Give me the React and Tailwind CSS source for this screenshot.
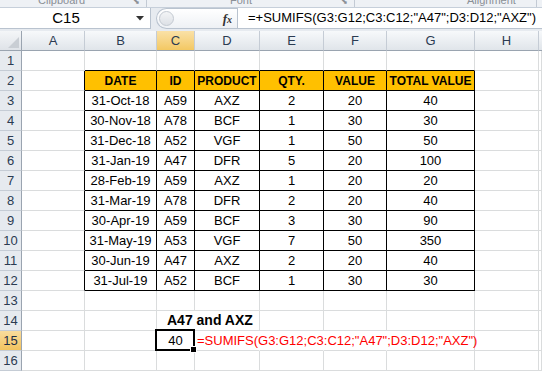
import React from "react";

const data = [
  ["31-Oct-18", "A59", "AXZ", "2", "20", "40"],
  ["30-Nov-18", "A78", "BCF", "1", "30", "30"],
  ["31-Dec-18", "A52", "VGF", "1", "50", "50"],
  ["31-Jan-19", "A47", "DFR", "5", "20", "100"],
  ["28-Feb-19", "A59", "AXZ", "1", "20", "20"],
  ["31-Mar-19", "A78", "DFR", "2", "20", "40"],
  ["30-Apr-19", "A59", "BCF", "3", "30", "90"],
  ["31-May-19", "A53", "VGF", "7", "50", "350"],
  ["30-Jun-19", "A47", "AXZ", "2", "20", "40"],
  ["31-Jul-19", "A52", "BCF", "1", "30", "30"],
];

const colWidths = ["w-[63px]", "w-[72px]", "w-[38px]", "w-[65px]", "w-[64px]", "w-[63px]", "w-[88px]", "w-[64px]"];
const colNames = ["A", "B", "C", "D", "E", "F", "G", "H"];

// r / b: "g" gridline, "k" black, "n" hidden
function Cell({ w, r = "g", b = "g", className = "", children }) {
  const rc = r === "k" ? "border-r-black" : r === "n" ? "border-r-white" : "border-r-[#dadcdd]";
  const bc = b === "k" ? "border-b-black" : "border-b-[#dadcdd]";
  return (
    <div className={`${w} shrink-0 h-full border-r border-b ${rc} ${bc} flex items-center justify-center whitespace-nowrap ${className}`}>
      {children}
    </div>
  );
}

function RowHeader({ n, active }) {
  return (
    <div
      className={`w-[22px] shrink-0 h-full border-r border-b border-r-[#9aa4b0] border-b-[#c5ccd5] flex items-center justify-center text-[13px] ${
        active ? "bg-linear-to-b from-[#f9dc9c] to-[#f2c35e] text-[#1d2d44]" : "bg-[#e6eaef] text-[#2b3b52]"
      }`}
    >
      {n}
    </div>
  );
}

function TableRow({ n, cells, header }) {
  const base = header ? "bg-[#ffc000] font-bold text-[12px]" : "text-[13px]";
  return (
    <div className="flex h-[20px]">
      <RowHeader n={n} />
      <Cell w={colWidths[0]} r="k" />
      {cells.map((c, i) => (
        <Cell key={i} w={colWidths[i + 1]} r="k" b="k" className={base}>
          {c}
        </Cell>
      ))}
      <Cell w={colWidths[7]} />
      <Cell w="flex-1" />
    </div>
  );
}

function EmptyRow({ n, bottomBlack }) {
  return (
    <div className="flex h-[20px]">
      <RowHeader n={n} />
      {colWidths.map((w, i) => (
        <Cell key={i} w={w} b={bottomBlack && i >= 1 && i <= 6 ? "k" : "g"} />
      ))}
      <Cell w="flex-1" />
    </div>
  );
}

export default function App() {
  return (
    <div className="w-[542px] h-[371px] overflow-hidden bg-white text-black font-['Liberation_Sans',Arial,sans-serif]">
      {/* ribbon group labels, cut off */}
      <div className="flex h-[8px] bg-[#eef1f5] border-b border-[#c6cfda] overflow-hidden text-[11px] leading-[11px] text-[#8a8f96]">
        <div className="w-[147px] border-r border-[#c3cad4] flex justify-between pl-[38px] pr-[6px]">
          <span className="-mt-[5px]">Clipboard</span>
          <span className="-mt-[4px] text-[8px]">⬊</span>
        </div>
        <div className="w-[208px] border-r border-[#c3cad4] flex justify-between pl-[83px] pr-[6px]">
          <span className="-mt-[5px]">Font</span>
          <span className="-mt-[4px] text-[8px]">⬊</span>
        </div>
        <div className="w-[182px] border-r border-[#c3cad4] pl-[112px]">
          <span className="block -mt-[5px]">Alignment</span>
        </div>
      </div>

      {/* formula bar */}
      <div className="flex h-[23px] bg-[#e7ebf0] pb-[1px]">
        <div className="w-[151px] h-[21px] bg-white border-b border-r border-[#b9c3cf] flex items-center">
          <span className="w-[132px] text-center text-[15px]">C15</span>
          <svg width="8" height="5" viewBox="0 0 8 5" className="ml-[4px]">
            <path d="M0 0H8L4 4.5Z" fill="#333" />
          </svg>
        </div>
        <div className="ml-[5px] w-[81px] h-[21px] rounded-l-full border border-r-0 border-[#b9c3cf] bg-linear-to-b from-[#ffffff] to-[#eef1f5] flex items-center">
          <div className="ml-[2px] w-[15px] h-[15px] rounded-full border border-[#c3c9d1] bg-linear-to-b from-[#f3f4f6] to-[#dde1e6]" />
          <span className="ml-auto mr-[5px] font-['Liberation_Serif',serif] italic font-bold text-[13px] text-[#333]">
            f<span className="text-[10px]">x</span>
          </span>
        </div>
        <div className="flex-1 h-[21px] bg-white border-l border-b border-[#b9c3cf] flex items-center pl-[10px] text-[13px]">
          =+SUMIFS(G3:G12;C3:C12;"A47";D3:D12;"AXZ")
        </div>
      </div>

      {/* column headers */}
      <div className="flex h-[20px] text-[13px] text-[#2b3b52]">
        <div className="w-[22px] shrink-0 h-full border-r border-b border-[#9aa4b0] bg-linear-to-b from-[#f4f6f8] to-[#dfe3e8] flex items-end justify-end p-[2px]">
          <svg width="11" height="11" viewBox="0 0 11 11">
            <path d="M11 0V11H0Z" fill="#c9ced4" />
          </svg>
        </div>
        {colNames.map((c, i) => (
          <div
            key={c}
            className={`${colWidths[i]} shrink-0 h-full border-r border-b border-r-[#c5ccd5] border-b-[#9aa4b0] flex items-center justify-center ${
              c === "C" ? "bg-linear-to-b from-[#fae1a6] to-[#f3c862]" : "bg-linear-to-b from-[#f7f9fb] to-[#e0e5ea]"
            }`}
          >
            {c}
          </div>
        ))}
        <div className="flex-1 h-full border-b border-[#9aa4b0] bg-linear-to-b from-[#f7f9fb] to-[#e0e5ea]" />
      </div>

      <EmptyRow n={1} bottomBlack />
      <TableRow n={2} header cells={["DATE", "ID", "PRODUCT", "QTY.", "VALUE", "TOTAL VALUE"]} />
      {data.map((row, i) => (
        <TableRow key={i} n={i + 3} cells={row} />
      ))}
      <EmptyRow n={13} />

      {/* row 14 */}
      <div className="flex h-[20px]">
        <RowHeader n={14} />
        <Cell w={colWidths[0]} />
        <Cell w={colWidths[1]} />
        <Cell w={colWidths[2]} r="n" className="justify-start overflow-visible">
          <span className="pl-[10px] font-bold text-[14px] relative z-10">A47 and AXZ</span>
        </Cell>
        <Cell w={colWidths[3]} />
        <Cell w={colWidths[4]} />
        <Cell w={colWidths[5]} />
        <Cell w={colWidths[6]} />
        <Cell w={colWidths[7]} />
        <Cell w="flex-1" />
      </div>

      {/* row 15 */}
      <div className="flex h-[20px]">
        <RowHeader n={15} active />
        <Cell w={colWidths[0]} />
        <Cell w={colWidths[1]} />
        <Cell w={colWidths[2]} className="relative text-[13px]">
          40
          <div className="absolute -left-[2px] -top-[2px] -right-[1px] -bottom-[1px] border-2 border-black" />
          <div className="absolute -right-[3px] -bottom-[3px] w-[5px] h-[5px] bg-black border border-white box-content" />
        </Cell>
        <Cell w={colWidths[3]} r="n" className="justify-start overflow-visible">
          <span className="pl-[2px] text-[13px] text-[#ff0000] relative z-10">
            =SUMIFS(G3:G12;C3:C12;"A47";D3:D12;"AXZ")
          </span>
        </Cell>
        <Cell w={colWidths[4]} r="n" />
        <Cell w={colWidths[5]} r="n" />
        <Cell w={colWidths[6]} />
        <Cell w={colWidths[7]} />
        <Cell w="flex-1" />
      </div>

      <EmptyRow n={16} />
    </div>
  );
}
